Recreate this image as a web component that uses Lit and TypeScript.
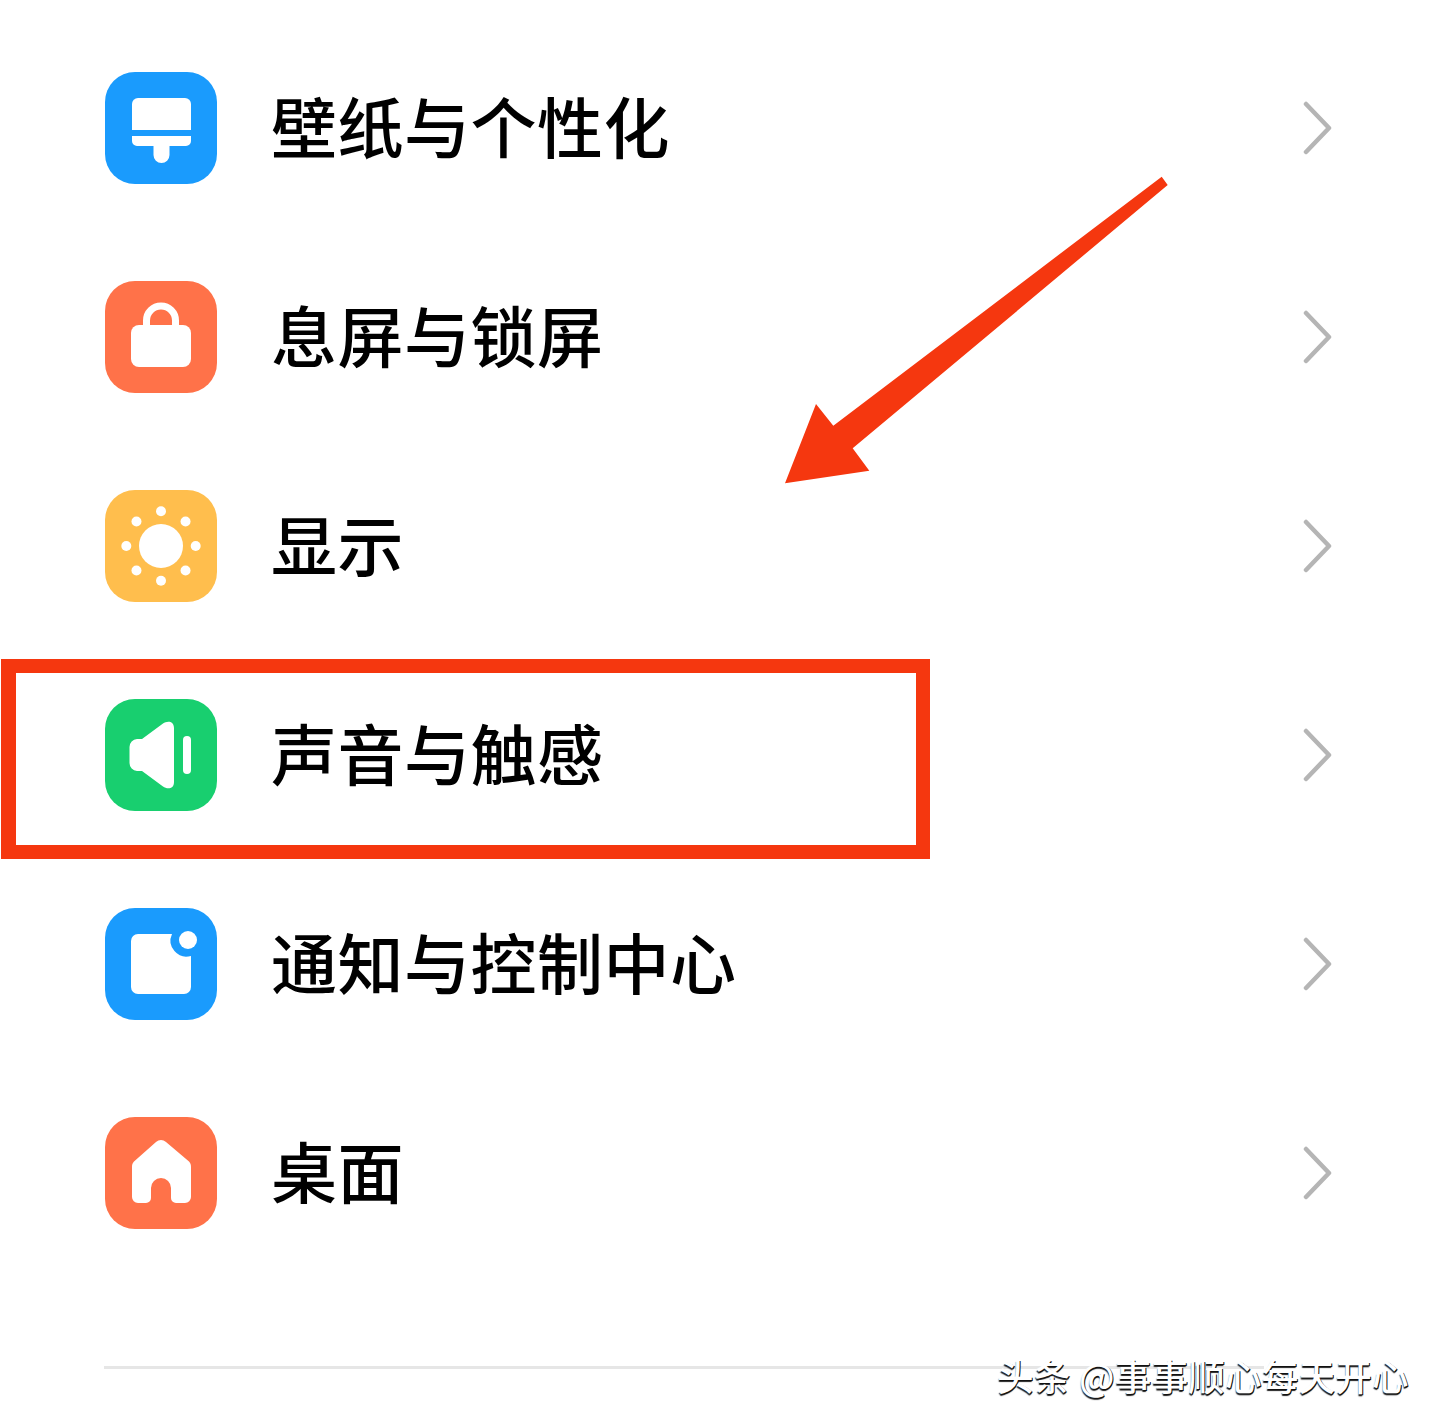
import { LitElement, html, css, svg } from "lit";
import { customElement } from "lit/decorators.js";

const sunDots = [0, 45, 90, 135, 180, 225, 270, 315].map((deg) => {
	const rad = (deg * Math.PI) / 180;
	return svg`<circle cx=${56 + 34.7 * Math.cos(rad)} cy=${56 + 34.7 * Math.sin(rad)} r="5" />`;
});

const icons = {
	brush: svg`
		<path d="M33 26H80a6 6 0 0 1 6 6V58H27V32a6 6 0 0 1 6-6Z" />
		<path d="M27 64H86V69a5 5 0 0 1-5 5H64.5V83a8 8 0 0 1-16 0V74H32a5 5 0 0 1-5-5Z" />
	`,
	lock: svg`
		<path d="M41.5 48V39.5a14.5 14.5 0 0 1 29 0V48" fill="none" stroke="#fff" stroke-width="7" />
		<rect x="26" y="44" width="60" height="42" rx="8" />
	`,
	sun: svg`<circle cx="56" cy="56" r="22" />${sunDots}`,
	speaker: svg`
		<path d="M32 40H37L58 24.500C62 21.500 69 21.500 69 29V83C69 90.500 62 90.500 58 87.500L37 72H32A8 8 0 0 1 24.500 64V48A8 8 0 0 1 32 40Z" />
		<rect x="78" y="37" width="8" height="38" rx="4" />
	`,
	notice: svg`
		<path d="M33 26H67A16 16 0 0 0 86 48V79A7 7 0 0 1 79 86H33A7 7 0 0 1 26 79V33A7 7 0 0 1 33 26Z" />
		<circle cx="83" cy="32" r="9" />
	`,
	home: svg`
		<path d="M51 25L29 44.500C27.500 46 27 47.500 27 50V80A6 6 0 0 0 33 86H41A5 5 0 0 0 46 81V71A10 10 0 0 1 66 71V81A5 5 0 0 0 71 86H80A6 6 0 0 0 86 80V50C86 47.500 85.500 46 84 44.500L61 25C58 22.300 54 22.300 51 25Z" />
	`,
};

type IconName = keyof typeof icons;

const rows: { icon: IconName; color: string; label: string }[] = [
	{ icon: "brush", color: "#1a9bfd", label: "壁纸与个性化" },
	{ icon: "lock", color: "#ff7249", label: "息屏与锁屏" },
	{ icon: "sun", color: "#ffbe4d", label: "显示" },
	{ icon: "speaker", color: "#18cf6f", label: "声音与触感" },
	{ icon: "notice", color: "#1a9bfd", label: "通知与控制中心" },
	{ icon: "home", color: "#ff7249", label: "桌面" },
];

@customElement("app-root")
export class AppRoot extends LitElement {
	static styles = css`
		:host {
			display: block;
			position: relative;
			height: 1428px;
			overflow: hidden;
			background: #fff;
			font-family: "Noto Sans CJK SC", "Noto Sans", sans-serif;
		}

		.list {
			display: flex;
			flex-direction: column;
			padding: 23px 108px 0 105px;
		}

		.row {
			display: flex;
			align-items: center;
			height: 209px;
		}

		.icon {
			flex: none;
			width: 112px;
			height: 112px;
			border-radius: 30px;
			fill: #fff;
		}

		.icon svg,
		.chevron {
			display: block;
		}

		.label {
			flex: 1;
			margin: 0 0 8px 54px;
			font-size: 66px;
			font-weight: 500;
			letter-spacing: 0.5px;
			line-height: 1;
			color: #000;
		}

		.chevron {
			flex: none;
			width: 30px;
			height: 54px;
			fill: none;
			stroke: #b5b5b5;
			stroke-width: 4.5;
			stroke-linecap: round;
			stroke-linejoin: round;
		}

		.divider {
			height: 3px;
			width: 1160px;
			margin: 89px 0 0 104px;
			background: #e6e6e6;
		}

		.highlight {
			position: absolute;
			left: 1px;
			top: 659px;
			width: 929px;
			height: 200px;
			box-sizing: border-box;
			border: 14px solid #f5370f;
			border-left-width: 15px;
		}

		.arrow {
			position: absolute;
			left: 0;
			top: 0;
			width: 1440px;
			height: 1428px;
			fill: #f5370f;
			pointer-events: none;
		}

		.watermark {
			position: absolute;
			left: 997px;
			top: 1351px;
			font-size: 36.5px;
			font-weight: 500;
			letter-spacing: 0.25px;
			line-height: 50px;
			white-space: nowrap;
			color: #fff;
			text-shadow: 1px 1px 0 #111, 0 2px 1px #222;
		}
	`;

	render() {
		return html`
			<div class="list">
				${rows.map(
					(row) => html`
						<div class="row">
							<div class="icon" style="background: ${row.color}">
								<svg viewBox="0 0 112 112" width="112" height="112">${icons[row.icon]}</svg>
							</div>
							<div class="label">${row.label}</div>
							<svg class="chevron" viewBox="0 0 30 54">
								<path d="M4 3L27 27L4 51" />
							</svg>
						</div>
					`
				)}
			</div>
			<div class="divider"></div>
			<div class="highlight"></div>
			<svg class="arrow" viewBox="0 0 1440 1428">
				<polygon points="1161.700,176.700 1167.700,185 852.700,448.300 869.300,470.700 785,483.300 816,404 833.300,425.700" />
			</svg>
			<div class="watermark">头条 @事事顺心每天开心</div>
		`;
	}
}
